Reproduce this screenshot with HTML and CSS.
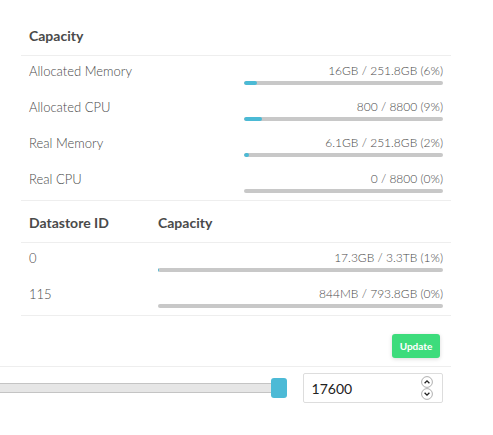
FILE: index.html
```html
<!DOCTYPE html>
<html lang="en">
<head>
    <meta charset="UTF-8">
    <meta name="viewport" content="width=device-width, initial-scale=1.0">
    <title>Host capacity</title>
    <link rel="stylesheet" href="styles.css">
</head>
<body>
    <div class="panel">
        <div class="grid-table cap">
            <div class="row head">
                <div>Capacity</div>
                <div></div>
            </div>
            <div class="row">
                <div class="label">Allocated Memory</div>
                <div class="meter">
                    <div class="value">16GB / 251.8GB (6%)</div>
                    <div class="bar"><span style="width: 6.4%"></span></div>
                </div>
            </div>
            <div class="row">
                <div class="label">Allocated CPU</div>
                <div class="meter">
                    <div class="value">800 / 8800 (9%)</div>
                    <div class="bar"><span style="width: 9%"></span></div>
                </div>
            </div>
            <div class="row">
                <div class="label">Real Memory</div>
                <div class="meter">
                    <div class="value">6.1GB / 251.8GB (2%)</div>
                    <div class="bar"><span style="width: 2.4%"></span></div>
                </div>
            </div>
            <div class="row">
                <div class="label">Real CPU</div>
                <div class="meter">
                    <div class="value">0 / 8800 (0%)</div>
                    <div class="bar"><span style="width: 0%"></span></div>
                </div>
            </div>
        </div>

        <div class="grid-table ds">
            <div class="row head">
                <div>Datastore ID</div>
                <div>Capacity</div>
            </div>
            <div class="row">
                <div class="label">0</div>
                <div class="meter">
                    <div class="value">17.3GB / 3.3TB (1%)</div>
                    <div class="bar"><span style="width: 0.5%"></span></div>
                </div>
            </div>
            <div class="row">
                <div class="label">115</div>
                <div class="meter">
                    <div class="value">844MB / 793.8GB (0%)</div>
                    <div class="bar"><span style="width: 0%"></span></div>
                </div>
            </div>
        </div>
    </div>

    <div class="form">
        <div class="actions">
            <button class="btn-update">Update</button>
        </div>
        <div class="slider-row">
            <div class="slider">
                <div class="track"></div>
                <div class="thumb"></div>
            </div>
            <div class="number">
                <span class="num-value">17600</span>
                <div class="spin">
                    <svg width="12" height="12" viewBox="0 0 12 12">
                        <circle cx="6" cy="6" r="5.4" fill="#fff" stroke="#9a9a9a" stroke-width="0.8"/>
                        <path d="M3.6 7.2 L6 4.8 L8.4 7.2" fill="none" stroke="#222" stroke-width="1.3"/>
                    </svg>
                    <svg width="12" height="12" viewBox="0 0 12 12">
                        <circle cx="6" cy="6" r="5.4" fill="#fff" stroke="#9a9a9a" stroke-width="0.8"/>
                        <path d="M3.6 4.8 L6 7.2 L8.4 4.8" fill="none" stroke="#222" stroke-width="1.3"/>
                    </svg>
                </div>
            </div>
        </div>
    </div>
</body>
</html>
```

FILE: styles.css
```css
body {
    margin: 0;
    font-family: 'Lato', 'Open Sans', Arial, sans-serif;
    background-color: #fff;
    color: #555;
}
.panel {
    margin: 20px 0 0 21px;
    width: 430px;
}
.grid-table {
    border-bottom: 1px solid #eeeeee;
}
.grid-table .row {
    display: grid;
    grid-template-columns: 215px 1fr;
    padding: 7px 8px 7px;
}
.grid-table.ds .row {
    grid-template-columns: 129px 1fr;
}
.grid-table.ds {
    margin-top: 6px;
}
.row.head {
    padding: 5px 8px 9px;
    font-size: 14px;
    font-weight: bold;
    line-height: 21px;
    color: #4a4a4a;
    border-bottom: 1px solid #eeeeee;
}
.label {
    font-size: 13px;
    font-weight: 300;
    line-height: 16px;
    color: #4a4a4a;
}
.meter {
    display: flex;
    flex-direction: column;
}
.value {
    text-align: right;
    font-size: 12px;
    font-weight: 300;
    line-height: 16px;
    color: #4a4a4a;
}
.bar {
    margin-top: 2px;
    height: 4px;
    border-radius: 2px;
    background-color: #c8c8c8;
    overflow: hidden;
}
.bar span {
    display: block;
    height: 100%;
    border-radius: 2px;
    background-color: #4bbad5;
}
.form {
    width: 451px;
}
.actions {
    display: flex;
    justify-content: flex-end;
    padding: 18px 11px 8px;
    border-bottom: 1px solid #eeeeee;
}
.btn-update {
    height: 24px;
    width: 48px;
    border: none;
    border-radius: 3px;
    background-color: #3ddc7c;
    color: #fff;
    font-family: 'Lato', Arial, sans-serif;
    font-size: 10px;
    font-weight: bold;
    box-shadow: 0 1px 4px rgba(0,0,0,0.15);
    padding: 0;
}
.slider-row {
    display: flex;
    align-items: center;
    gap: 16px;
    padding: 6px 8px 0 0;
}
.slider {
    position: relative;
    width: 288px;
    height: 20px;
    display: flex;
    align-items: center;
}
.track {
    width: 100%;
    height: 8px;
    background-color: #e6e6e6;
    border: 1px solid #c4c4c4;
    border-left: none;
    border-radius: 0 3px 3px 0;
}
.thumb {
    position: absolute;
    right: 0;
    top: 0;
    width: 16px;
    height: 20px;
    border-radius: 3px;
    background-color: #4cbad6;
}
.number {
    height: 28px;
    border: 1px solid #dddddd;
    border-radius: 2px;
    display: flex;
    align-items: center;
    justify-content: space-between;
    padding: 0 9px 0 8px;
    width: 122px;
}
.num-value {
    font-size: 14px;
    color: #222;
}
.spin {
    display: flex;
    flex-direction: column;
}
```
